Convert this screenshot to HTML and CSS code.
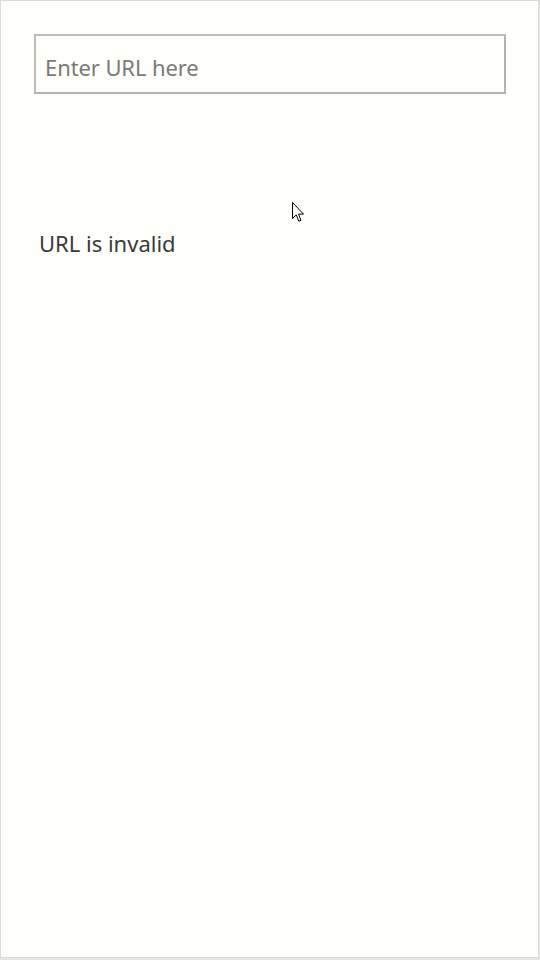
FILE: index.html
```html
<!DOCTYPE html>
<html lang="en">
<head>
<meta charset="utf-8">
<title>URL checker</title>
<link rel="stylesheet" href="styles.css">
</head>
<body>
<div class="frame">
  <div class="field">
    <input class="url-input" type="text" placeholder="Enter URL here">
  </div>
  <p class="status">URL is invalid</p>
  <svg class="cursor" width="13" height="21" viewBox="0 0 13 21" aria-hidden="true">
    <path d="M0.5 0.5 L0.5 16.5 L4.3 12.9 L6.8 19.2 L9 18.3 L6.5 12.1 L11.5 12.1 Z" fill="#ffffff" stroke="#000000" stroke-width="1" stroke-linejoin="miter"/>
  </svg>
</div>
</body>
</html>
```

FILE: styles.css
```css
html, body {
  margin: 0;
  padding: 0;
}
body {
  background: #e4e4e0;
  width: 540px;
  height: 960px;
  overflow: hidden;
}
.frame {
  position: relative;
  box-sizing: border-box;
  width: 539px;
  height: 958px;
  border: 1px solid #dcdcd8;
  background: #fefefa;
  padding: 33px 0 0 33px;
  font-family: "Noto Sans", "Open Sans", sans-serif;
}
.field {
  width: 472px;
}
.url-input {
  box-sizing: border-box;
  width: 472px;
  height: 60px;
  margin: 0;
  border: 2px solid #b3b3b0;
  border-top-color: #bdbdba;
  border-left-color: #bdbdba;
  background: #fefefa;
  padding: 5px 0 0 9px;
  font-family: "Noto Sans", "Open Sans", sans-serif;
  font-size: 22px;
  letter-spacing: -0.1px;
  color: #333;
  outline: none;
}
.url-input::placeholder {
  color: #7a7a76;
  opacity: 1;
}
.status {
  margin: 134px 0 0 5px;
  font-size: 22px;
  line-height: 30px;
  color: #3a3a3a;
}
.cursor {
  position: absolute;
  left: 291px;
  top: 201px;
}
```
